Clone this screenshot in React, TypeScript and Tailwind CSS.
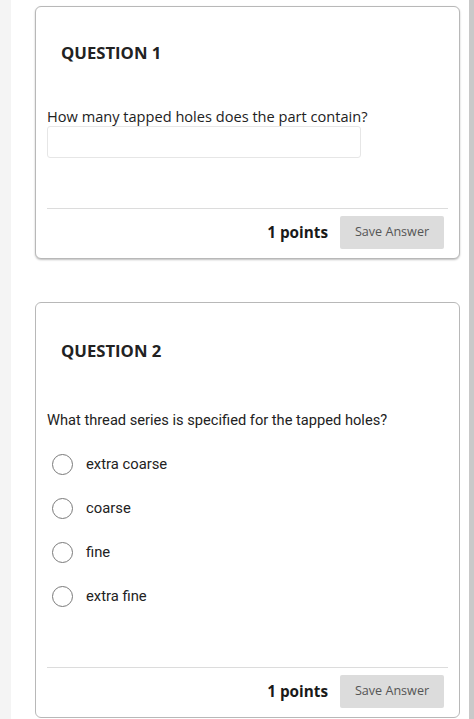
const options = ['extra coarse', 'coarse', 'fine', 'extra fine'];

function Footer() {
  return (
    <div>
      <div className="mx-[11px] h-px bg-[#dcdcdc]" />
      <div className="flex items-center justify-end gap-3 pr-[15px] pt-[7px] pb-[9px]">
        <span className="text-[15.3px] font-bold text-[#1a1a1a]">1 points</span>
        <button className="h-[33px] w-[104px] rounded-[2px] bg-[#dcdcdc] text-[12.6px] text-[#555]">
          Save Answer
        </button>
      </div>
    </div>
  );
}

export default function App() {
  return (
    <main
      className="flex min-h-[719px] bg-white"
      style={{ fontFamily: '"Open Sans", "Liberation Sans", sans-serif' }}
    >
      <div className="w-[11px] shrink-0 bg-[#f4f4f4]" />

      <div className="flex-1 pl-[24px] pr-[9px] pt-[6px]">
        <section className="rounded-[6px] border border-[#b8b8b8] bg-white shadow-[0_1px_2px_rgba(0,0,0,0.25)]">
          <div className="px-[11px] pt-[34px]">
            <h2 className="ml-[14px] text-[16.7px] leading-[24px] font-bold text-[#222]">QUESTION 1</h2>
            <p className="mt-[41px] text-[14.6px] leading-[20px] text-[#222]">
              How many tapped holes does the part contain?
            </p>
            <div className="h-[32px] w-[314px] rounded-[3px] border border-[#e6e6e6]" />
          </div>
          <div className="h-[50px]" />
          <Footer />
        </section>

        <section className="mt-[43px] rounded-[6px] border border-[#b8b8b8] bg-white">
          <div className="px-[11px] pt-[36px]">
            <h2 className="ml-[14px] text-[16.7px] leading-[24px] font-bold text-[#222]">QUESTION 2</h2>
            <p
              className="mt-[47px] text-[14.65px] leading-[20px] text-[#222]"
              style={{ fontFamily: 'Roboto, "Liberation Sans", sans-serif' }}
            >
              What thread series is specified for the tapped holes?
            </p>
            <div className="mt-[12px]" style={{ fontFamily: 'Roboto, "Liberation Sans", sans-serif' }}>
              {options.map((o) => (
                <label key={o} className="flex h-[44px] items-center">
                  <span className="ml-[5px] h-[21px] w-[21px] rounded-full border-[1.5px] border-[#7a7a7a]" />
                  <span className="ml-[13px] text-[14.8px] text-[#222]">{o}</span>
                </label>
              ))}
            </div>
          </div>
          <div className="h-[49px]" />
          <Footer />
        </section>
      </div>

      <div className="w-[5px] shrink-0 bg-[#c9c9c9]" />
    </main>
  );
}
